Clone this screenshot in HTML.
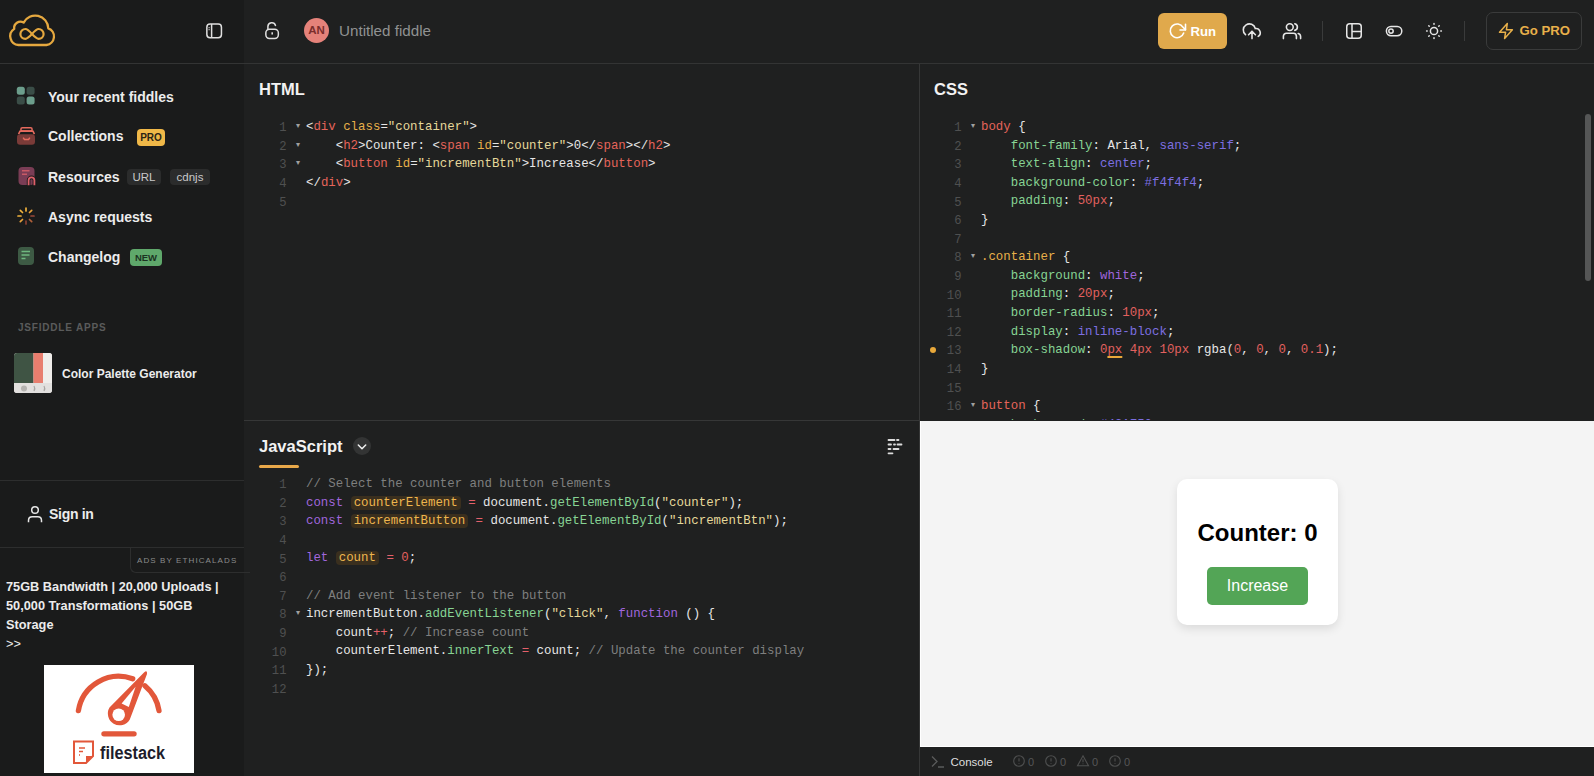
<!DOCTYPE html>
<html><head><meta charset="utf-8">
<style>
*{box-sizing:border-box;margin:0;padding:0}
html,body{width:1594px;height:776px;overflow:hidden;background:#1f2020;font-family:"Liberation Sans",sans-serif;color:#e8e8e8}
.abs{position:absolute}
#side{position:absolute;left:0;top:0;width:244px;height:776px;background:#1a1b1b}
#hdr{position:absolute;left:244px;top:0;width:1350px;height:63px;background:#1f2020}
.hline{position:absolute;height:1px;background:#333434}
.vline{position:absolute;width:1px;background:#333434}
.code{position:absolute;font-family:"Liberation Mono",monospace;font-size:12.4px;line-height:18.6px;white-space:pre;color:#e6e6e6}
.ln{position:absolute;font-family:"Liberation Mono",monospace;font-size:12.2px;line-height:18.6px;color:#4f5050;text-align:right;white-space:pre}
.fold{position:absolute;font-size:7.5px;color:#a0a0a0;line-height:18.6px;white-space:pre}
.t{color:#e5645a}.a{color:#e8b04a}.s{color:#e6d89a}.p{color:#87d494}.v{color:#7d6fe0}.n{color:#e2615f}.k{color:#a066dd}.c{color:#7e7f7f}.o{color:#e5606a}.f{color:#87d494}
.hl{background:#3a2f1e;color:#eeb64e;border-radius:4px;padding:0 3px}
.nav{position:absolute;left:48px;font-size:14px;font-weight:700;color:#ececec;white-space:nowrap}
.badge{position:absolute;border-radius:4px;font-size:10px;font-weight:700;text-align:center}
</style></head><body>
<div id="side"></div>
<div id="hdr"></div>
<div class="hline" style="left:0;top:63px;width:1594px"></div>

<!-- logo -->
<svg class="abs" style="left:0;top:0" width="70" height="60" viewBox="0 0 70 60">
<path d="M18.5,45 H46.5 A8.65,8.65 0 0 0 48.3,28.3 A13.1,13.1 0 0 0 23.6,22.6 A6.3,6.3 0 0 0 14.2,28.9 A8.8,8.8 0 0 0 18.5,45 Z" fill="none" stroke="#e5a83f" stroke-width="2.3" stroke-linejoin="round"/>
<path d="M32,34 C34.8,30.8 36.6,29 38.6,29 A5,4.9 0 0 1 38.6,38.8 C36.6,38.8 34.8,37 32,34 C29.2,30.8 27.4,29 25.4,29 A5,4.9 0 0 0 25.4,38.8 C27.4,38.8 29.2,37 32,34 Z" fill="none" stroke="#e5a83f" stroke-width="2.2"/>
</svg>

<!-- header -->
<svg class="abs" style="left:262px;top:20px" width="20" height="22" viewBox="0 0 20 22">
<path d="M5.9,9.2 V6.6 A3.9,3.9 0 0 1 13.5,5.4" fill="none" stroke="#e0e0e0" stroke-width="1.5" stroke-linecap="round"/>
<rect x="3.85" y="9.15" width="12.5" height="9.3" rx="3.6" fill="none" stroke="#e0e0e0" stroke-width="1.5"/>
<rect x="9.4" y="12.3" width="1.6" height="2.2" fill="#e0e0e0"/>
</svg>
<div class="abs" style="left:304px;top:18px;width:25px;height:25px;border-radius:50%;background:#e5827a;color:#7a2e2c;font-size:11.5px;font-weight:700;text-align:center;line-height:25px">AN</div>
<div class="abs" style="left:339px;top:21.5px;font-size:15.2px;color:#909292;white-space:nowrap">Untitled fiddle</div>

<div class="abs" style="left:1158px;top:13px;width:69px;height:36px;border-radius:6px;background:#e0a94c"></div>
<svg class="abs" style="left:1167px;top:21px" width="21" height="20" viewBox="0 0 21 20">
<path d="M16.7,12.1 A6.9,6.9 0 1 1 16.1,6.3 L18.4,8.6" fill="none" stroke="#fff" stroke-width="1.6" stroke-linecap="round" stroke-linejoin="round"/>
<path d="M18.5,3.2 V9 H13" fill="none" stroke="#fff" stroke-width="1.6" stroke-linecap="round" stroke-linejoin="round"/>
</svg>
<div class="abs" style="left:1190.5px;top:23.5px;font-size:13.2px;font-weight:700;color:#fff;white-space:nowrap">Run</div>
<svg class="abs" style="left:1241px;top:21px" width="22" height="20" viewBox="0 0 22 20">
<path d="M4.5,13.7 A6.1,6.1 0 1 1 14.3,7.5 A4.3,4.3 0 0 1 17.2,15.4" fill="none" stroke="#e6e6e6" stroke-width="1.6" stroke-linecap="round"/>
<path d="M11,17.6 V10.4 M7.6,13.8 L11,10.3 L14.4,13.8" fill="none" stroke="#e6e6e6" stroke-width="1.6" stroke-linecap="round" stroke-linejoin="round"/>
</svg>
<svg class="abs" style="left:1281px;top:21px" width="22" height="20" viewBox="0 0 22 20">
<circle cx="8.8" cy="6.1" r="3.4" fill="none" stroke="#e6e6e6" stroke-width="1.6"/>
<path d="M2.4,17.6 V15.2 A3,3 0 0 1 5.4,12.2 H12.4 A3,3 0 0 1 15.4,15.2 V17.6" fill="none" stroke="#e6e6e6" stroke-width="1.6" stroke-linecap="round"/>
<path d="M13.8,2.8 A3.4,3.4 0 0 1 13.8,9.4 M17.2,12.5 A3.2,3.2 0 0 1 19.6,15.5 V17.6" fill="none" stroke="#e6e6e6" stroke-width="1.6" stroke-linecap="round"/>
</svg>
<div class="vline" style="left:1322px;top:21px;height:20px;background:#3a3b3b"></div>
<svg class="abs" style="left:1344px;top:21px" width="20" height="20" viewBox="0 0 20 20">
<rect x="2.75" y="2.75" width="14.5" height="14.5" rx="3" fill="none" stroke="#e6e6e6" stroke-width="1.5"/>
<path d="M8,2.75 V17.25 M8,10.5 H17.25" stroke="#e6e6e6" stroke-width="1.5"/>
</svg>
<svg class="abs" style="left:1384px;top:21px" width="20" height="20" viewBox="0 0 20 20">
<rect x="2.4" y="5.5" width="15.4" height="9.2" rx="4.6" fill="none" stroke="#e6e6e6" stroke-width="1.5"/>
<circle cx="7" cy="10.1" r="2.2" fill="none" stroke="#e6e6e6" stroke-width="1.5"/>
</svg>
<svg class="abs" style="left:1424px;top:21px" width="20" height="20" viewBox="0 0 20 20">
<circle cx="10" cy="10" r="3.6" fill="none" stroke="#e6e6e6" stroke-width="1.5"/>
<g stroke="#e6e6e6" stroke-width="1.5" stroke-linecap="round">
<path d="M10,2.6 V3.2 M10,16.8 V17.4 M2.6,10 H3.2 M16.8,10 H17.4 M4.8,4.8 L5.2,5.2 M14.8,14.8 L15.2,15.2 M4.8,15.2 L5.2,14.8 M14.8,5.2 L15.2,4.8"/>
</g>
</svg>
<div class="vline" style="left:1464px;top:21px;height:20px;background:#3a3b3b"></div>
<div class="abs" style="left:1486px;top:12px;width:96px;height:38px;border-radius:7px;border:1px solid #3a3b3b"></div>
<svg class="abs" style="left:1497px;top:22px" width="18" height="18" viewBox="0 0 18 18">
<path d="M10.3,1.5 L2.5,10.2 H8.6 L7.6,16.5 L15.4,7.8 H9.4 Z" fill="none" stroke="#e8b04a" stroke-width="1.5" stroke-linejoin="round"/>
</svg>
<div class="abs" style="left:1519.5px;top:23px;font-size:13.2px;font-weight:700;color:#e8b04a;white-space:nowrap">Go PRO</div>

<!-- panels -->
<div class="vline" style="left:919px;top:64px;height:712px;background:#363737"></div>
<div class="hline" style="left:244px;top:420px;width:675px;background:#363737"></div>

<div class="abs" style="left:259px;top:80px;font-size:16.5px;font-weight:700;color:#f2f2f2">HTML</div>
<div class="ln" style="left:260.5px;top:119.3px;width:26px">1
2
3
4
5</div>
<div class="fold" style="left:295.7px;top:117px">▾
▾
▾</div>
<div class="code" style="left:306px;top:118px">&lt;<span class="t">div</span> <span class="a">class</span>=<span class="s">"container"</span>&gt;
    &lt;<span class="t">h2</span>&gt;Counter: &lt;<span class="t">span</span> <span class="a">id</span>=<span class="s">"counter"</span>&gt;0&lt;/<span class="t">span</span>&gt;&lt;/<span class="t">h2</span>&gt;
    &lt;<span class="t">button</span> <span class="a">id</span>=<span class="s">"incrementBtn"</span>&gt;Increase&lt;/<span class="t">button</span>&gt;
&lt;/<span class="t">div</span>&gt;
</div>

<div class="abs" style="left:934px;top:80px;font-size:16.5px;font-weight:700;color:#f2f2f2">CSS</div>
<div class="abs" style="left:920px;top:64px;width:674px;height:356px;overflow:hidden">
<div class="ln" style="left:15.5px;top:55.3px;width:26px">1
2
3
4
5
6
7
8
9
10
11
12
13
14
15
16
17</div>
<div class="fold" style="left:50.7px;top:53px">▾






▾







▾</div>
<div class="code" style="left:61px;top:54px"><span class="t">body</span> {
    <span class="p">font-family</span>: Arial, <span class="v">sans-serif</span>;
    <span class="p">text-align</span>: <span class="v">center</span>;
    <span class="p">background-color</span>: <span class="v">#f4f4f4</span>;
    <span class="p">padding</span>: <span class="n">50px</span>;
}

<span class="a">.container</span> {
    <span class="p">background</span>: <span class="k">white</span>;
    <span class="p">padding</span>: <span class="n">20px</span>;
    <span class="p">border-radius</span>: <span class="n">10px</span>;
    <span class="p">display</span>: <span class="v">inline-block</span>;
    <span class="p">box-shadow</span>: <span class="n">0</span><span class="n" style="text-decoration:underline;text-decoration-color:#e8a83a;text-decoration-thickness:2px;text-underline-offset:3px">px</span> <span class="n">4px</span> <span class="n">10px</span> rgba(<span class="n">0</span>, <span class="n">0</span>, <span class="n">0</span>, <span class="n">0.1</span>);
}

<span class="t">button</span> {
    <span class="p">background</span>: <span class="v">#4CAF50</span>;
</div>
<div class="abs" style="left:9.5px;top:283px;width:6px;height:6px;border-radius:50%;background:#e8a83a"></div>
<div class="abs" style="left:664.5px;top:50px;width:6px;height:167px;border-radius:3px;background:#555656"></div>
</div>

<div class="abs" style="left:259px;top:436.5px;font-size:16.5px;font-weight:700;color:#f2f2f2">JavaScript</div>
<div class="abs" style="left:353px;top:437px;width:18px;height:18px;border-radius:50%;background:#333434"></div>
<svg class="abs" style="left:353px;top:437px" width="18" height="18" viewBox="0 0 18 18"><path d="M5.3,8 L9,11.7 L12.7,8" fill="none" stroke="#f0f0f0" stroke-width="1.5" stroke-linecap="round" stroke-linejoin="round"/></svg>
<div class="abs" style="left:259px;top:464.5px;width:40px;height:3.5px;border-radius:2px;background:#e8a84a"></div>
<svg class="abs" style="left:886px;top:437px" width="18" height="20" viewBox="0 0 18 20">
<g stroke="#dcdcdc" stroke-width="1.8" stroke-linecap="round">
<path d="M2.5,3 H8.5 M11,3 H12.5 M2.5,7.5 H5 M8,7.5 H9 M11.5,7.5 H15.5 M2.5,12 H4.5 M7.5,12 H12.5 M2.5,16.3 H6.5"/>
</g></svg>
<div class="ln" style="left:260.5px;top:476.3px;width:26px">1
2
3
4
5
6
7
8
9
10
11
12</div>
<div class="fold" style="left:295.7px;top:604.2px">▾</div>
<div class="code" style="left:306px;top:475px"><span class="c">// Select the counter and button elements</span>
<span class="k">const</span> <span class="hl">counterElement</span> <span class="o">=</span> document.<span class="f">getElementById</span>(<span class="s">"counter"</span>);
<span class="k">const</span> <span class="hl">incrementButton</span> <span class="o">=</span> document.<span class="f">getElementById</span>(<span class="s">"incrementBtn"</span>);

<span class="k">let</span> <span class="hl">count</span> <span class="o">=</span> <span class="n">0</span>;

<span class="c">// Add event listener to the button</span>
incrementButton.<span class="f">addEventListener</span>(<span class="s">"click"</span>, <span class="k">function</span> () {
    count<span class="o">++</span>; <span class="c">// Increase count</span>
    counterElement.<span class="f">innerText</span> <span class="o">=</span> count; <span class="c">// Update the counter display</span>
});
</div>

<!-- result -->
<div class="abs" style="left:920px;top:421px;width:674px;height:326px;background:#f4f4f4;border-left:1px solid #fff;border-bottom:1px solid #fff;overflow:hidden">
<div style="padding:58px 8px 0;text-align:center;font-family:'Liberation Sans',sans-serif">
<div style="display:inline-block;background:#fff;padding:20px;border-radius:10px;box-shadow:0 4px 10px rgba(0,0,0,0.1)">
<h2 style="font-size:24px;font-weight:700;margin:19.92px 0;color:#000;line-height:normal">Counter: <span>0</span></h2>
<button style="background:#53a556;color:#fff;border:none;padding:10px 20px;font-size:16px;border-radius:5px;font-family:'Liberation Sans',sans-serif;line-height:normal">Increase</button>
</div></div></div>
<div class="abs" style="left:920px;top:747px;width:674px;height:29px;background:#1f2020"></div>
<svg class="abs" style="left:930px;top:754px" width="16" height="16" viewBox="0 0 16 16"><path d="M2,2.5 L7,7.5 L2,12.5 M8,13 H14" fill="none" stroke="#5a5b5b" stroke-width="1.3"/></svg>
<div class="abs" style="left:950.5px;top:756px;font-size:11.5px;color:#dedede;white-space:nowrap">Console</div>

<svg class="abs" style="left:1012px;top:754px" width="124" height="14" viewBox="0 0 124 14">
<g fill="none" stroke="#4e4f4f" stroke-width="1.1">
<circle cx="7" cy="7" r="5.3"/><path d="M7,4.2 V7.6 M7,9.3 V9.9"/>
<circle cx="39" cy="7" r="5.3"/><path d="M39,4.2 V7.6 M39,9.3 V9.9"/>
<path d="M71,1.8 L76.5,11.8 H65.5 Z"/><path d="M71,5.3 V8.2 M71,9.6 V10.2"/>
<circle cx="103" cy="7" r="5.3"/><path d="M103,4.2 V7.6 M103,9.3 V9.9"/>
</g></svg>
<div class="abs" style="left:1028px;top:755.5px;font-size:11px;color:#555656;white-space:pre;word-spacing:0">0</div>
<div class="abs" style="left:1060px;top:755.5px;font-size:11px;color:#555656">0</div>
<div class="abs" style="left:1092px;top:755.5px;font-size:11px;color:#555656">0</div>
<div class="abs" style="left:1124px;top:755.5px;font-size:11px;color:#555656">0</div>

<!-- sidebar -->
<svg class="abs" style="left:204px;top:22px" width="20" height="18" viewBox="0 0 20 18">
<rect x="2.85" y="1.95" width="14.6" height="13.8" rx="3.2" fill="none" stroke="#e0e0e0" stroke-width="1.5"/>
<line x1="7.6" y1="1.95" x2="7.6" y2="15.75" stroke="#e0e0e0" stroke-width="1.5"/>
<line x1="4.6" y1="5.6" x2="5.6" y2="5.6" stroke="#e0e0e0" stroke-width="1.1"/>
<line x1="4.6" y1="7.6" x2="5.6" y2="7.6" stroke="#e0e0e0" stroke-width="1.1"/>
</svg>

<!-- nav icons -->
<svg class="abs" style="left:16px;top:86px" width="20" height="20" viewBox="0 0 20 20">
<rect x="0.8" y="0.8" width="8" height="8" rx="2.5" fill="#6c9e8c"/>
<rect x="10.6" y="0.8" width="8" height="8" rx="2.5" fill="#3a4d47"/>
<rect x="0.8" y="10.6" width="8" height="8" rx="2.5" fill="#3a4d47"/>
<rect x="10.6" y="10.6" width="8" height="8" rx="2.5" fill="#6c9e8c"/>
</svg>
<svg class="abs" style="left:16px;top:126px" width="20" height="20" viewBox="0 0 20 20">
<rect x="4.9" y="1.7" width="11.2" height="3.4" rx="1.5" fill="none" stroke="#e66b5e" stroke-width="1.5"/>
<path d="M2.6,8.2 L4,5.1 H17 L18.4,8.2" fill="none" stroke="#e66b5e" stroke-width="1.6" stroke-linejoin="round"/>
<rect x="1" y="8.3" width="18" height="10.4" rx="3" fill="#7a3b38"/>
<path d="M7.2,11.6 L8.5,13.6 H12.5 L13.8,11.6" fill="none" stroke="#e66b5e" stroke-width="1.5" stroke-linejoin="round"/>
</svg>
<svg class="abs" style="left:17px;top:166px" width="20" height="21" viewBox="0 0 20 21">
<rect x="1.5" y="1" width="16" height="18" rx="4" fill="#7a3d55"/>
<path d="M5,4.7 H12.5 M5,8.3 H10" stroke="#c95a66" stroke-width="1.4"/>
<path d="M11.6,19.2 V14.3 A2.9,2.9 0 0 1 17.4,14.3 V19.2" fill="none" stroke="#1a1b1b" stroke-width="3.6"/>
<path d="M11.6,19.2 V14.3 A2.9,2.9 0 0 1 17.4,14.3 V19.2" fill="none" stroke="#e0606a" stroke-width="1.8"/>
</svg>
<svg class="abs" style="left:16px;top:206px" width="20" height="20" viewBox="0 0 20 20">
<g stroke-width="1.7" stroke-linecap="round">
<line x1="10" y1="2" x2="10" y2="5" stroke="#f0b23c"/>
<line x1="15.7" y1="4.3" x2="13.5" y2="6.5" stroke="#e8a23c"/>
<line x1="18" y1="10" x2="15" y2="10" stroke="#9a4a3a"/>
<line x1="15.7" y1="15.7" x2="13.5" y2="13.5" stroke="#b0603a"/>
<line x1="10" y1="18" x2="10" y2="15" stroke="#8a4033"/>
<line x1="4.3" y1="15.7" x2="6.5" y2="13.5" stroke="#e8a23c"/>
<line x1="2" y1="10" x2="5" y2="10" stroke="#f0b23c"/>
<line x1="4.3" y1="4.3" x2="6.5" y2="6.5" stroke="#f0b23c"/>
</g>
</svg>
<svg class="abs" style="left:17px;top:246px" width="20" height="20" viewBox="0 0 20 20">
<rect x="1" y="1" width="16" height="18" rx="4" fill="#3d5a44"/>
<path d="M4.5,5.5 H13 M4.5,9 H12.5 M4.5,12.5 H8.5" stroke="#6fb87f" stroke-width="1.3"/>
</svg>

<div class="nav" style="top:89px">Your recent fiddles</div>
<div class="nav" style="top:128px">Collections</div>
<div class="badge" style="left:137px;top:129px;width:28px;height:17px;line-height:17px;background:#f0b848;color:#2b2416">PRO</div>
<div class="nav" style="top:168.5px">Resources</div>
<div class="badge" style="left:127px;top:169px;width:34px;height:16px;line-height:16px;background:#2b2c2c;color:#c9c9c9;font-weight:400;font-size:11.5px">URL</div>
<div class="badge" style="left:170px;top:169px;width:40px;height:16px;line-height:16px;background:#2b2c2c;color:#c9c9c9;font-weight:400;font-size:11.5px">cdnjs</div>
<div class="nav" style="top:208.7px">Async requests</div>
<div class="nav" style="top:248.5px">Changelog</div>
<div class="badge" style="left:130px;top:249px;width:32px;height:17px;line-height:17px;background:#5fa86b;color:#1c3322;font-size:9.5px">NEW</div>

<div class="abs" style="left:18px;top:322px;font-size:10px;font-weight:700;letter-spacing:0.8px;color:#5a5b5b;white-space:nowrap">JSFIDDLE APPS</div>
<svg class="abs" style="left:14px;top:353px" width="38" height="40" viewBox="0 0 38 40">
<defs><clipPath id="cp"><rect x="0" y="0" width="38" height="40" rx="3"/></clipPath></defs>
<g clip-path="url(#cp)">
<rect x="0" y="0" width="38" height="40" fill="#ebe9e6"/>
<rect x="0" y="0" width="19.5" height="30" fill="#3f5444"/>
<rect x="19.5" y="0" width="9.5" height="30" fill="#e87e6e"/>
<rect x="29" y="0" width="9" height="30" fill="#efedea"/>
<rect x="0" y="30" width="38" height="10" fill="#e2e0de"/>
<circle cx="10" cy="35.5" r="3" fill="#b5b3b0"/>
<path d="M20,33 q1.5,2.5 0,5 M30,33 q1.5,2.5 0,5" stroke="#a9a7a4" stroke-width="1.2" fill="none"/>
</g>
</svg>
<div class="abs" style="left:62px;top:366.5px;font-size:12px;font-weight:700;color:#ececec;white-space:nowrap">Color Palette Generator</div>

<div class="hline" style="left:0;top:480px;width:244px;background:#2d2e2e"></div>
<svg class="abs" style="left:26px;top:504px" width="18" height="20" viewBox="0 0 18 20">
<circle cx="9" cy="6" r="3.3" fill="none" stroke="#e6e6e6" stroke-width="1.5"/>
<path d="M2.5,18.2 V16.5 Q2.5,12.8 6.2,12.8 H11.8 Q15.5,12.8 15.5,16.5 V18.2" fill="none" stroke="#e6e6e6" stroke-width="1.5"/>
</svg>
<div class="abs" style="left:49px;top:506px;font-size:14px;font-weight:700;letter-spacing:-0.3px;color:#ececec;white-space:nowrap">Sign in</div>
<div class="hline" style="left:0;top:547px;width:244px;background:#2d2e2e"></div>
<div class="abs" style="left:130px;top:547px;width:120px;height:26px;border-left:1px solid #2d2e2e;border-bottom:1px solid #2d2e2e;border-bottom-left-radius:6px"></div>
<div class="abs" style="left:137px;top:556px;font-size:8px;letter-spacing:1.1px;color:#8a8b8b;white-space:nowrap">ADS BY ETHICALADS</div>
<div class="abs" style="left:6px;top:577px;width:236px;font-size:12.75px;line-height:19px;font-weight:700;color:#ececec">75GB Bandwidth | 20,000 Uploads |<br>50,000 Transformations | 50GB<br>Storage<br><span style="font-weight:400">&gt;&gt;</span></div>

<svg class="abs" style="left:44px;top:665px" width="150" height="108" viewBox="0 0 150 108">
<rect width="150" height="108" fill="#ffffff"/>
<path d="M34.4,45.7 A40.8,40.8 0 0 1 88.7,13.8" fill="none" stroke="#e2573a" stroke-width="5.3" stroke-linecap="round"/>
<path d="M100.9,20.8 A40.8,40.8 0 0 1 115,45.7" fill="none" stroke="#e2573a" stroke-width="5.3" stroke-linecap="round"/>
<path d="M65.5,42.5 L100,7.5 Q103.5,4.5 103,9 L85.8,54.5 A11.6,11.6 0 1 1 65.5,42.5 Z" fill="#e2573a"/>
<path d="M77.6,38.6 L91.6,21.7 L84.8,42 Z" fill="#ffffff"/>
<circle cx="74.7" cy="49.8" r="6.3" fill="#ffffff"/>
<rect x="57.3" y="66.2" width="35.4" height="5.3" rx="2.65" fill="#e2573a"/>
<path d="M30,76.5 H49 V91 L42,98 H30 Z" fill="none" stroke="#e2573a" stroke-width="2"/>
<path d="M42,98 L49,91 H42 Z" fill="#e2573a"/>
<path d="M35,83 H41 M35,86.5 H39 M35,90 H36" stroke="#e2573a" stroke-width="1.6"/>
<text x="56" y="94" font-family="Liberation Sans" font-weight="700" font-size="18" fill="#1d1c2b" textLength="65" lengthAdjust="spacingAndGlyphs">filestack</text>
</svg>

</body></html>
